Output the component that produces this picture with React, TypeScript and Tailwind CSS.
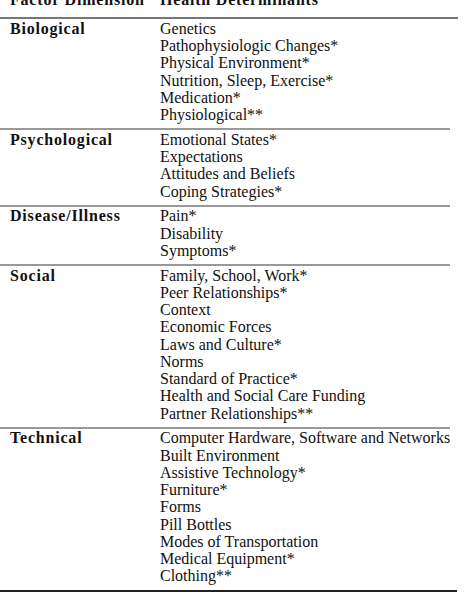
const sections = [
  {
    name: "Biological",
    items: [
      "Genetics",
      "Pathophysiologic Changes*",
      "Physical Environment*",
      "Nutrition, Sleep, Exercise*",
      "Medication*",
      "Physiological**",
    ],
  },
  {
    name: "Psychological",
    items: ["Emotional States*", "Expectations", "Attitudes and Beliefs", "Coping Strategies*"],
  },
  {
    name: "Disease/Illness",
    items: ["Pain*", "Disability", "Symptoms*"],
  },
  {
    name: "Social",
    items: [
      "Family, School, Work*",
      "Peer Relationships*",
      "Context",
      "Economic Forces",
      "Laws and Culture*",
      "Norms",
      "Standard of Practice*",
      "Health and Social Care Funding",
      "Partner Relationships**",
    ],
  },
  {
    name: "Technical",
    items: [
      "Computer Hardware, Software and Networks",
      "Built Environment",
      "Assistive Technology*",
      "Furniture*",
      "Forms",
      "Pill Bottles",
      "Modes of Transportation",
      "Medical Equipment*",
      "Clothing**",
    ],
  },
];

export default function App() {
  return (
    <div className="h-[602px] w-[474px] overflow-hidden bg-white text-[#111] font-['Liberation_Serif',serif] text-[16px] leading-[17.25px]">
      {/* Header row, cut off at the top */}
      <div className="-mt-[9px] w-[458px] border-b-2 border-[#777]">
        <div className="grid grid-cols-[150px_1fr] pl-[10px] pb-[9px] font-bold tracking-[0.8px]">
          <div>Factor Dimension</div>
          <div>Health Determinants</div>
        </div>
      </div>

      {sections.map((s, i) => {
        const last = i === sections.length - 1;
        return (
          <div
            key={s.name}
            className={
              last
                ? "w-[457px] border-b-2 border-[#222]"
                : "w-[450px] border-b-2 border-[#999]"
            }
          >
            <div className="grid grid-cols-[150px_1fr] pl-[10px] pt-[0.5px] pb-[5px]">
              <div className="font-bold tracking-[0.8px]">{s.name}</div>
              <div className="flex flex-col">
                {s.items.map((it) => (
                  <div key={it} className="whitespace-nowrap">
                    {it}
                  </div>
                ))}
              </div>
            </div>
          </div>
        );
      })}
    </div>
  );
}
